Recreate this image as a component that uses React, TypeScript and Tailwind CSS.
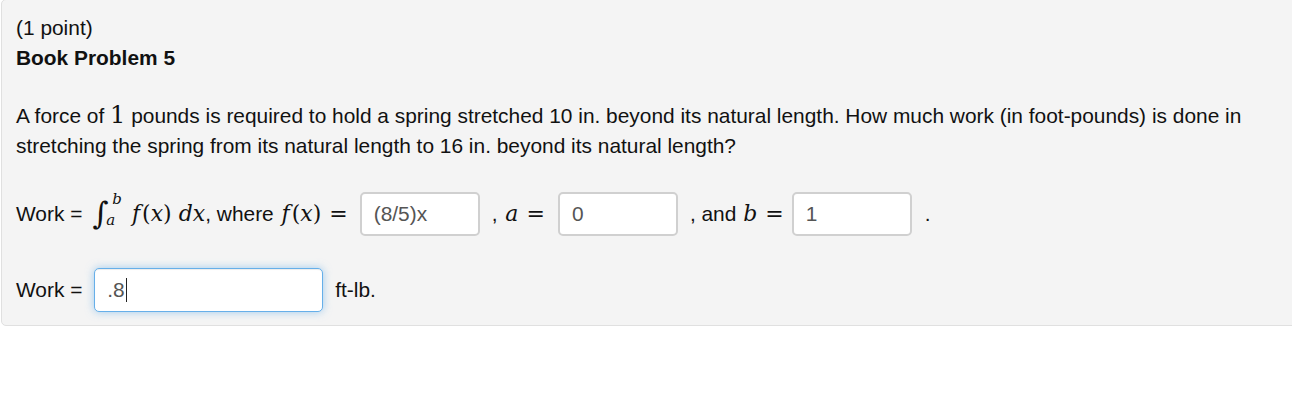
import React from 'react';

const serif = "font-['DejaVu_Serif','Liberation_Serif',serif]";

function MI({ children, cls = '' }: { children: React.ReactNode; cls?: string }) {
  return <span className={`${serif} italic text-[22px] leading-none ${cls}`}>{children}</span>;
}

function MR({ children, cls = '' }: { children: React.ReactNode; cls?: string }) {
  return <span className={`${serif} text-[22px] leading-none ${cls}`}>{children}</span>;
}

function Eq() {
  return <MR cls="mx-[8px]">=</MR>;
}

function Field({ value, w = 'w-[120px]', focus = false }: { value: string; w?: string; focus?: boolean }) {
  return (
    <span
      className={`inline-flex items-center h-[44px] ${w} px-[12px] rounded-[5px] bg-white text-[#555] ${
        focus
          ? 'border border-[#66afe9] shadow-[inset_0_1px_1px_rgba(0,0,0,0.075),0_0_8px_rgba(102,175,233,0.6)]'
          : 'border-2 border-[#d0d0d0]'
      }`}
    >
      {value}
      {focus && <span className="inline-block w-px h-[24px] bg-[#222] ml-px" />}
    </span>
  );
}

export default function App() {
  return (
    <div className="w-[1292px] h-[416px] bg-white overflow-hidden font-['Liberation_Sans',Arial,sans-serif] text-[20.9px] leading-[29.7px] text-[#111]">
      <div className="ml-px w-[1300px] -mt-px border border-[#e0e0e0] rounded-[5px] bg-[#f4f4f4] pt-[13px] pb-[13px] pl-[14px] pr-[40px]">
        <p>(1 point)</p>
        <p className="font-bold">Book Problem 5</p>

        <p className="mt-[29px] w-[1240px]">
          A force of <span className={`${serif} text-[24px] leading-none inline-block`}>1</span> pounds is required to
          hold a spring stretched 10 in. beyond its natural length. How much work (in foot-pounds) is done in stretching
          the spring from its natural length to 16 in. beyond its natural length?
        </p>

        {/* integral row */}
        <div className="mt-[31px] flex items-center h-[44px] whitespace-nowrap">
          <span>Work =&nbsp;</span>
          <span className="inline-flex items-center ml-[4px]">
            <span className={`${serif} italic text-[31px] leading-none`}>∫</span>
            <span className="inline-flex flex-col leading-none ml-[1px]">
              <span className={`${serif} italic text-[15px] leading-[15px] -mt-[8px] ml-[3px]`}>b</span>
              <span className={`${serif} italic text-[15px] leading-[15px] mt-[6px] -ml-[3px]`}>a</span>
            </span>
          </span>
          <span className="ml-[10px] inline-flex items-center">
            <MI>f</MI>
            <MR cls="ml-[2px]">(</MR>
            <MI>x</MI>
            <MR>)</MR>
            <MI cls="ml-[7px]">dx</MI>
          </span>
          <span>, where&nbsp;</span>
          <MI cls="ml-[2px]">f</MI>
          <MR cls="ml-[2px]">(</MR>
          <MI>x</MI>
          <MR>)</MR>
          <Eq />
          <span className="ml-[4px]">
            <Field value="(8/5)x" />
          </span>
          <span className="ml-[12px]">,&nbsp;</span>
          <MI cls="ml-[2px]">a</MI>
          <Eq />
          <span className="ml-[5px]">
            <Field value="0" />
          </span>
          <span className="ml-[12px]">, and&nbsp;</span>
          <MI cls="ml-[1px]">b</MI>
          <Eq />
          <Field value="1" />
          <span className="ml-[13px]">.</span>
        </div>

        {/* answer row */}
        <div className="mt-[32px] flex items-center h-[44px] whitespace-nowrap">
          <span>Work =&nbsp;</span>
          <span className="ml-[6px]">
            <Field value=".8" w="w-[229px]" focus />
          </span>
          <span className="ml-[12px]">ft-lb.</span>
        </div>
      </div>
    </div>
  );
}
